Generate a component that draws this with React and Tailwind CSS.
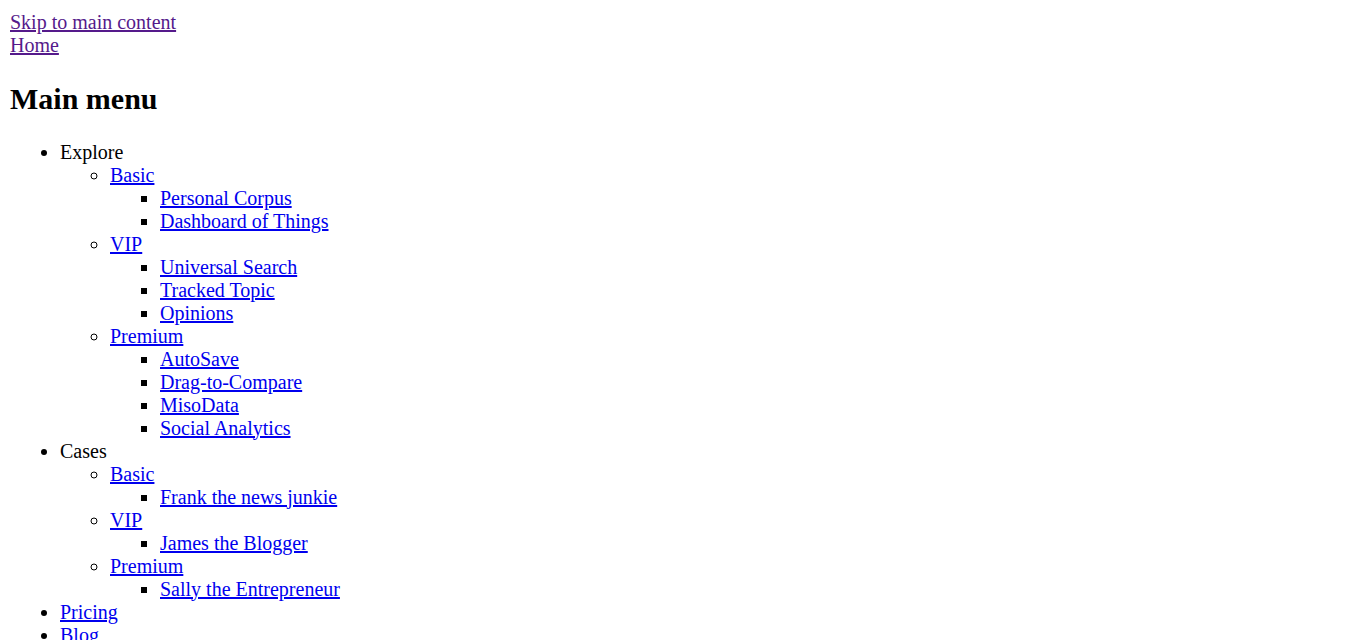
const menu = [
  {
    label: 'Explore',
    groups: [
      { label: 'Basic', items: ['Personal Corpus', 'Dashboard of Things'] },
      { label: 'VIP', items: ['Universal Search', 'Tracked Topic', 'Opinions'] },
      {
        label: 'Premium',
        items: ['AutoSave', 'Drag-to-Compare', 'MisoData', 'Social Analytics'],
      },
    ],
  },
  {
    label: 'Cases',
    groups: [
      { label: 'Basic', items: ['Frank the news junkie'] },
      { label: 'VIP', items: ['James the Blogger'] },
      { label: 'Premium', items: ['Sally the Entrepreneur'] },
    ],
  },
];

const link = 'underline text-[#0000EE]';
const visited = 'underline text-[#551A8B]';

export default function App() {
  return (
    <div className="min-h-screen bg-white px-[10px] pt-[11px] pb-[10px] font-['Liberation_Serif','Times_New_Roman',serif] text-[20px] leading-[23px] text-black">
      <a href="#main" className={`block w-fit ${visited}`}>
        Skip to main content
      </a>
      <a href="#" className={`block w-fit ${visited}`}>
        Home
      </a>

      <nav>
        <h1 className="mt-[25px] mb-[24px] text-[30px] font-bold leading-[34.5px]">
          Main menu
        </h1>
        <ul className="list-disc pl-[50px]">
          {menu.map((section) => (
            <li key={section.label}>
              {section.label}
              <ul className="list-[circle] pl-[50px]">
                {section.groups.map((group) => (
                  <li key={group.label}>
                    <a href="#" className={link}>
                      {group.label}
                    </a>
                    <ul className="list-[square] pl-[50px]">
                      {group.items.map((item) => (
                        <li key={item}>
                          <a href="#" className={link}>
                            {item}
                          </a>
                        </li>
                      ))}
                    </ul>
                  </li>
                ))}
              </ul>
            </li>
          ))}
          <li>
            <a href="#" className={link}>
              Pricing
            </a>
          </li>
          <li>
            <a href="#" className={link}>
              Blog
            </a>
          </li>
        </ul>
      </nav>
    </div>
  );
}
